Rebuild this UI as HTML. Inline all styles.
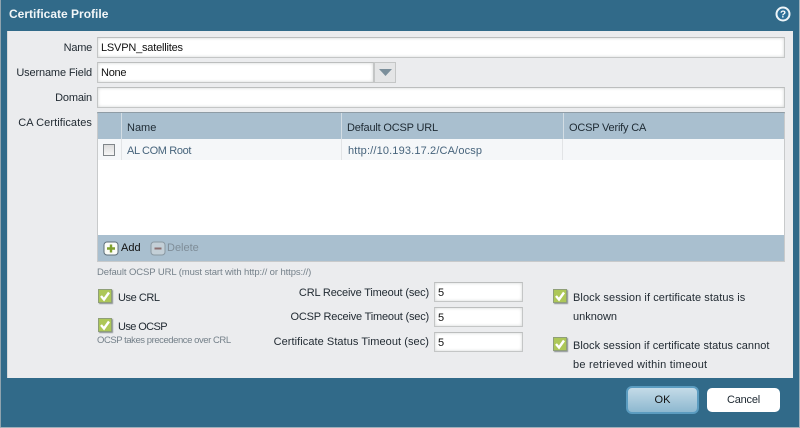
<!DOCTYPE html>
<html><head><meta charset="utf-8"><style>
html,body{margin:0;padding:0;background:#9aa8b0}
#r{position:relative;width:800px;height:428px;overflow:hidden;background:#316a89;font-family:"Liberation Sans",Arial,sans-serif;font-size:11px;color:#222b33}
#r div,#r svg{position:absolute;box-sizing:border-box}
.t{white-space:nowrap;line-height:14px}
.l{text-align:right;width:120px}
.i{background:#fff;border:1px solid #c4c6c6;border-top:1px solid #bcbebe;box-shadow:inset 0 0 3px #d2d4d4;color:#111;padding-left:3px;line-height:20px;font-size:11px}
.c{width:14px;height:14px;background:#adc758;border:1px solid #8f9f78;box-shadow:1px 1px 1px #8c9294}
.h{top:113px;height:26px;background:#a9bfcf;line-height:30px;color:#1e2a33;white-space:nowrap;font-size:11px;border-left:1px solid #d3dde4}
.g{color:#75818a;font-size:9.5px}
</style></head><body><div id="r">
<div style="left:0;top:0;width:1px;height:428px;background:#8fa3ae"></div>
<div style="left:799px;top:0;width:1px;height:428px;background:#9fb1bb"></div>
<div style="left:0;top:427px;width:800px;height:1px;background:#9fb1bb"></div>
<div class="t" style="left:9px;top:7px;color:#f2f6f8;font-weight:bold;font-size:12px">Certificate Profile</div>
<svg style="left:775px;top:6px" width="16" height="16" viewBox="0 0 16 16"><circle cx="8" cy="8" r="6.500" fill="#2f7199" stroke="#eef5f8" stroke-width="2"/><text x="8" y="11.500" text-anchor="middle" font-family="Liberation Sans" font-size="10" font-weight="bold" fill="#fff">?</text></svg>

<div style="left:7px;top:31px;width:786px;height:347px;background:#ebecee;border-left:1px solid #d5d8da"></div>

<div class="t l" style="left:-28px;top:41px;letter-spacing:-.25px">Name</div>
<div class="i" style="left:97px;top:37px;width:688px;height:21px;letter-spacing:-.2px">LSVPN_satellites</div>
<div class="t l" style="left:-28px;top:66px;letter-spacing:-.14px">Username Field</div>
<div class="i" style="left:97px;top:62px;width:277px;height:21px;letter-spacing:-.25px">None</div>
<div style="left:374px;top:62px;width:22px;height:21px;background:#e4e5e6;border:1px solid #c4c6c6"></div>
<svg style="left:379px;top:68px" width="13" height="9" viewBox="0 0 13 9"><path d="M0 1H13L6.500 8Z" fill="#7b8f9b"/></svg>
<div class="t l" style="left:-28px;top:91px;letter-spacing:-.17px">Domain</div>
<div class="i" style="left:97px;top:87px;width:688px;height:21px"></div>
<div class="t l" style="left:-28px;top:116px;letter-spacing:.07px">CA Certificates</div>

<div style="left:97px;top:112px;width:688px;height:150px;background:#fff;border:1px solid #c8cacb;border-top:2px solid #8f9ca5"></div>
<div class="h" style="left:98px;width:23px;border-left:0"></div>
<div class="h" style="left:121px;width:220px;padding-left:5px">Name</div>
<div class="h" style="left:341px;width:222px;padding-left:5px;letter-spacing:-.19px">Default OCSP URL</div>
<div class="h" style="left:563px;width:221px;padding-left:5px;letter-spacing:-.2px">OCSP Verify CA</div>
<div style="left:98px;top:139px;width:686px;height:21px;background:#f5f7f9"></div>
<div style="left:121px;top:139px;width:1px;height:21px;background:#e2e4e6"></div>
<div style="left:341px;top:139px;width:1px;height:21px;background:#e2e4e6"></div>
<div style="left:562px;top:139px;width:1px;height:21px;background:#e2e4e6"></div>
<div style="left:103px;top:144px;width:12px;height:12px;background:linear-gradient(#ddd,#f5f5f5);border:1px solid #80868a"></div>
<div class="t" style="left:127px;top:144px;color:#47647c;letter-spacing:-.36px">AL COM Root</div>
<div class="t" style="left:348px;top:144px;color:#47647c;letter-spacing:.15px">http://10.193.17.2/CA/ocsp</div>

<div style="left:98px;top:235px;width:686px;height:26px;background:#a9bfcf"></div>
<svg style="left:103px;top:241px" width="16" height="15" viewBox="0 0 16 15"><rect x="1" y="1" width="14" height="13" rx="3" fill="#fbfcf8" stroke="#5e6f7a"/><path d="M8 3.500V11.500M4 7.500H12" stroke="#7f9f2e" stroke-width="2.400"/></svg>
<div class="t" style="left:121px;top:241px;color:#111">Add</div>
<svg style="left:150px;top:241px" width="16" height="15" viewBox="0 0 16 15"><rect x="1" y="1" width="14" height="13" rx="3" fill="#c3cfd7" stroke="#8a98a2"/><path d="M4.500 7.500H11.500" stroke="#8c6f70" stroke-width="2"/></svg>
<div class="t" style="left:167px;top:241px;color:#7f8d98">Delete</div>
<div class="t g" style="left:97px;top:266px;letter-spacing:-.1px">Default OCSP URL (must start with http:// or https://)</div>

<div class="c" style="left:98px;top:289px"></div>
<svg style="left:98px;top:289px" width="14" height="14" viewBox="0 0 14 14"><path d="M3 7L6 10.500L11 3.500" fill="none" stroke="#fff" stroke-width="2.400"/></svg>
<div class="t" style="left:118px;top:291px;letter-spacing:-.43px">Use CRL</div>
<div class="c" style="left:98px;top:318px"></div>
<svg style="left:98px;top:318px" width="14" height="14" viewBox="0 0 14 14"><path d="M3 7L6 10.500L11 3.500" fill="none" stroke="#fff" stroke-width="2.400"/></svg>
<div class="t" style="left:118px;top:320px;letter-spacing:-.6px">Use OCSP</div>
<div class="t g" style="left:97px;top:334px;letter-spacing:-.45px">OCSP takes precedence over CRL</div>

<div class="t" style="left:229px;width:200px;text-align:right;top:286px;letter-spacing:-.16px">CRL Receive Timeout (sec)</div>
<div class="i" style="left:434px;top:282px;width:89px;height:20px">5</div>
<div class="t" style="left:229px;width:200px;text-align:right;top:310px;letter-spacing:-.19px">OCSP Receive Timeout (sec)</div>
<div class="i" style="left:434px;top:307px;width:89px;height:20px">5</div>
<div class="t" style="left:229px;width:200px;text-align:right;top:335px;letter-spacing:.06px">Certificate Status Timeout (sec)</div>
<div class="i" style="left:434px;top:332px;width:89px;height:20px">5</div>

<div class="c" style="left:553px;top:289px"></div>
<svg style="left:553px;top:289px" width="14" height="14" viewBox="0 0 14 14"><path d="M3 7L6 10.500L11 3.500" fill="none" stroke="#fff" stroke-width="2.400"/></svg>
<div class="t" style="left:573px;top:291px;letter-spacing:.08px">Block session if certificate status is</div>
<div class="t" style="left:573px;top:310px">unknown</div>
<div class="c" style="left:553px;top:337px"></div>
<svg style="left:553px;top:337px" width="14" height="14" viewBox="0 0 14 14"><path d="M3 7L6 10.500L11 3.500" fill="none" stroke="#fff" stroke-width="2.400"/></svg>
<div class="t" style="left:573px;top:339px;letter-spacing:.05px">Block session if certificate status cannot</div>
<div class="t" style="left:573px;top:358px;letter-spacing:.22px">be retrieved within timeout</div>

<div style="left:626px;top:386px;width:73px;height:28px;border-radius:6px;background:linear-gradient(#c4dbe8,#8db8d0);border:2px solid #5b9cc0;text-align:center;line-height:24px;color:#111">OK</div>
<div style="left:707px;top:388px;width:73px;height:24px;border-radius:5px;background:#fff;text-align:center;line-height:24px;color:#1c2730;letter-spacing:-.2px">Cancel</div>
</div></body></html>
